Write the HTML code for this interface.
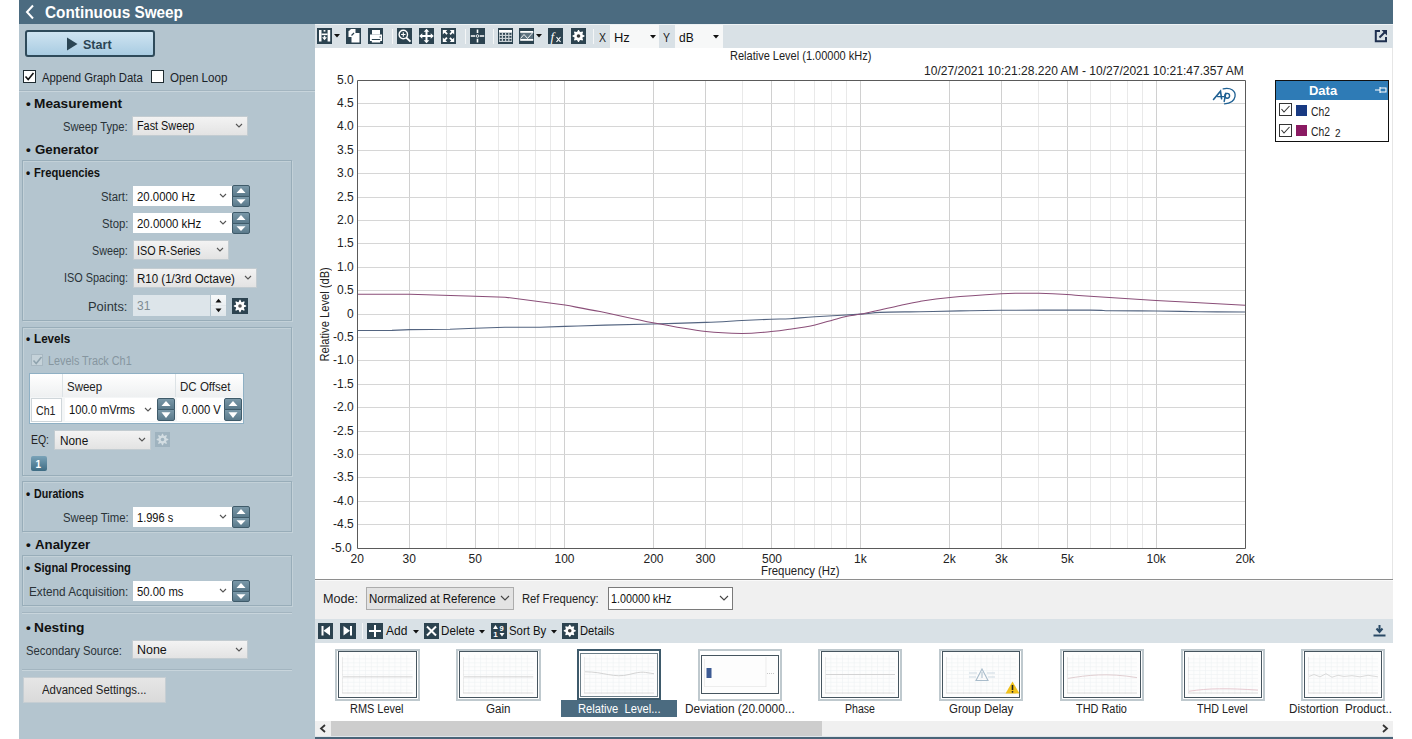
<!DOCTYPE html>
<html><head><meta charset="utf-8"><style>
html,body{margin:0;padding:0;}
body{width:1412px;height:739px;position:relative;overflow:hidden;background:#fff;font-family:"Liberation Sans", sans-serif;}
</style></head><body>
<div style="position:absolute;box-sizing:border-box;left:19px;top:0px;width:1374px;height:24px;background:#4b6b80;"></div>
<svg style="position:absolute;left:24px;top:4px;" width="12" height="16" viewBox="0 0 12 16"><path d="M9 1.5 L3 8 L9 14.5" stroke="#fff" stroke-width="2" fill="none"/></svg>
<span id="t0" style="position:absolute;left:45.04px;top:5.46px;font-size:16px;line-height:16px;font-weight:700;color:#fff;white-space:pre;transform:scaleX(0.9582);transform-origin:0 0;">Continuous Sweep</span>
<div style="position:absolute;box-sizing:border-box;left:19px;top:24px;width:296px;height:715px;background:#b4c5cf;"></div>
<div style="position:absolute;box-sizing:border-box;left:25px;top:30px;width:130px;height:27px;border:2px solid #2e4a5a;border-radius:3px;background:linear-gradient(#cfe4f1,#a9cce2);"></div>
<svg style="position:absolute;left:66px;top:37px;" width="12" height="14" viewBox="0 0 12 14"><path d="M1 0.5 L11.5 7 L1 13.5 Z" fill="#2b4554"/></svg>
<span id="t1" style="position:absolute;left:83.03px;top:38.30px;font-size:13px;line-height:13px;font-weight:700;color:#2b4554;white-space:pre;transform:scaleX(0.9655);transform-origin:0 0;">Start</span>
<div style="position:absolute;box-sizing:border-box;left:23px;top:70px;width:13px;height:13px;border:1px solid #1e2a30;background:#fff;"></div>
<svg style="position:absolute;left:23px;top:70px;" width="13" height="13" viewBox="0 0 13 13"><path d="M2.5 6.5 L5.2 9.5 L10.5 3" stroke="#111" stroke-width="1.6" fill="none"/></svg>
<span id="t2" style="position:absolute;left:42.00px;top:71.84px;font-size:12px;line-height:12px;font-weight:400;color:#1b2328;white-space:pre;transform:scaleX(0.9439);transform-origin:0 0;">Append Graph Data</span>
<div style="position:absolute;box-sizing:border-box;left:151px;top:70px;width:13px;height:13px;border:1px solid #1e2a30;background:#fff;"></div>
<span id="t3" style="position:absolute;left:170.00px;top:71.84px;font-size:12px;line-height:12px;font-weight:400;color:#1b2328;white-space:pre;transform:scaleX(0.9661);transform-origin:0 0;">Open Loop</span>
<div style="position:absolute;box-sizing:border-box;left:19px;top:90px;width:296px;height:1px;background:#a3b5c0;"></div>
<div style="position:absolute;box-sizing:border-box;left:19px;top:91px;width:296px;height:1px;background:#c8d5dc;"></div>
<span id="t4" style="position:absolute;left:26.00px;top:97.27px;font-size:13.5px;line-height:13.5px;font-weight:700;color:#111;white-space:pre;">•</span>
<span id="t5" style="position:absolute;left:33.99px;top:97.27px;font-size:13.5px;line-height:13.5px;font-weight:700;color:#111;white-space:pre;transform:scaleX(1.0116);transform-origin:0 0;">Measurement</span>
<span id="t6" style="position:absolute;left:62.52px;top:121.24px;font-size:12px;line-height:12px;font-weight:400;color:#2a3338;white-space:pre;transform:scaleX(0.9342);transform-origin:0 0;">Sweep Type:</span>
<div style="position:absolute;box-sizing:border-box;left:132px;top:116px;width:116px;height:19.5px;border:1px solid #c3ccd1;background:linear-gradient(#f3f3f3,#e3e3e3);"></div>
<span id="t7" style="position:absolute;left:137.09px;top:120.49px;font-size:12px;line-height:12px;font-weight:400;color:#111;white-space:pre;transform:scaleX(0.9032);transform-origin:0 0;">Fast Sweep</span>
<svg style="position:absolute;left:235px;top:122.75px;" width="8" height="5" viewBox="0 0 8 5"><path d="M1 1 L4 4 L7 1" stroke="#555" stroke-width="1.1" fill="none"/></svg>
<span id="t8" style="position:absolute;left:26.00px;top:143.27px;font-size:13.5px;line-height:13.5px;font-weight:700;color:#111;white-space:pre;">•</span>
<span id="t9" style="position:absolute;left:35.00px;top:143.27px;font-size:13.5px;line-height:13.5px;font-weight:700;color:#111;white-space:pre;transform:scaleX(0.9851);transform-origin:0 0;">Generator</span>
<div style="position:absolute;box-sizing:border-box;left:22px;top:160px;width:270px;height:161px;border:1px solid #98adb9;box-shadow:inset 1px 1px 0 #c3d1d8, 1px 1px 0 #c3d1d8;"></div>
<span id="t10" style="position:absolute;left:26.00px;top:166.54px;font-size:12px;line-height:12px;font-weight:700;color:#111;white-space:pre;">•</span>
<span id="t11" style="position:absolute;left:34.07px;top:166.54px;font-size:12px;line-height:12px;font-weight:700;color:#111;white-space:pre;transform:scaleX(0.9350);transform-origin:0 0;">Frequencies</span>
<span id="t12" style="position:absolute;left:100.58px;top:190.84px;font-size:12px;line-height:12px;font-weight:400;color:#2a3338;white-space:pre;transform:scaleX(0.9445);transform-origin:0 0;">Start:</span>
<div style="position:absolute;box-sizing:border-box;left:133px;top:186px;width:99px;height:20px;background:#fff;"></div>
<span id="t13" style="position:absolute;left:137.05px;top:190.74px;font-size:12px;line-height:12px;font-weight:400;color:#111;white-space:pre;transform:scaleX(0.9500);transform-origin:0 0;">20.0000 Hz</span>
<svg style="position:absolute;left:219px;top:193.0px;" width="8" height="5" viewBox="0 0 8 5"><path d="M1 1 L4 4 L7 1" stroke="#555" stroke-width="1.1" fill="none"/></svg>
<div style="position:absolute;box-sizing:border-box;left:232px;top:185px;width:18px;height:12px;border:1px solid #3f5b6a;background:linear-gradient(#7a98a8,#5b7a8b);border-radius:2px 2px 0 0;"></div>
<div style="position:absolute;box-sizing:border-box;left:232px;top:196px;width:18px;height:11px;border:1px solid #3f5b6a;background:linear-gradient(#7a98a8,#5b7a8b);border-radius:0 0 2px 2px;"></div>
<svg style="position:absolute;left:232px;top:185px;" width="18" height="22" viewBox="0 0 18 22"><path d="M4.5 8 L9.0 3 L13.5 8 Z" fill="#fff"/><path d="M4.5 14.2 L9.0 19 L13.5 14.2 Z" fill="#fff"/></svg>
<span id="t14" style="position:absolute;left:101.57px;top:217.94px;font-size:12px;line-height:12px;font-weight:400;color:#2a3338;white-space:pre;transform:scaleX(0.9439);transform-origin:0 0;">Stop:</span>
<div style="position:absolute;box-sizing:border-box;left:133px;top:213px;width:99px;height:20px;background:#fff;"></div>
<span id="t15" style="position:absolute;left:137.05px;top:217.74px;font-size:12px;line-height:12px;font-weight:400;color:#111;white-space:pre;transform:scaleX(0.9545);transform-origin:0 0;">20.0000 kHz</span>
<svg style="position:absolute;left:219px;top:220.0px;" width="8" height="5" viewBox="0 0 8 5"><path d="M1 1 L4 4 L7 1" stroke="#555" stroke-width="1.1" fill="none"/></svg>
<div style="position:absolute;box-sizing:border-box;left:232px;top:212px;width:18px;height:12px;border:1px solid #3f5b6a;background:linear-gradient(#7a98a8,#5b7a8b);border-radius:2px 2px 0 0;"></div>
<div style="position:absolute;box-sizing:border-box;left:232px;top:223px;width:18px;height:11px;border:1px solid #3f5b6a;background:linear-gradient(#7a98a8,#5b7a8b);border-radius:0 0 2px 2px;"></div>
<svg style="position:absolute;left:232px;top:212px;" width="18" height="22" viewBox="0 0 18 22"><path d="M4.5 8 L9.0 3 L13.5 8 Z" fill="#fff"/><path d="M4.5 14.2 L9.0 19 L13.5 14.2 Z" fill="#fff"/></svg>
<span id="t16" style="position:absolute;left:92.14px;top:244.94px;font-size:12px;line-height:12px;font-weight:400;color:#2a3338;white-space:pre;transform:scaleX(0.8947);transform-origin:0 0;">Sweep:</span>
<div style="position:absolute;box-sizing:border-box;left:133px;top:240px;width:96px;height:20px;border:1px solid #c3ccd1;background:linear-gradient(#f3f3f3,#e3e3e3);"></div>
<span id="t17" style="position:absolute;left:137.10px;top:244.74px;font-size:12px;line-height:12px;font-weight:400;color:#111;white-space:pre;transform:scaleX(0.8986);transform-origin:0 0;">ISO R-Series</span>
<svg style="position:absolute;left:216px;top:247.0px;" width="8" height="5" viewBox="0 0 8 5"><path d="M1 1 L4 4 L7 1" stroke="#555" stroke-width="1.1" fill="none"/></svg>
<span id="t18" style="position:absolute;left:63.63px;top:272.44px;font-size:12px;line-height:12px;font-weight:400;color:#2a3338;white-space:pre;transform:scaleX(0.9048);transform-origin:0 0;">ISO Spacing:</span>
<div style="position:absolute;box-sizing:border-box;left:133px;top:268px;width:124px;height:20px;border:1px solid #c3ccd1;background:linear-gradient(#f3f3f3,#e3e3e3);"></div>
<span id="t19" style="position:absolute;left:137.04px;top:272.74px;font-size:12px;line-height:12px;font-weight:400;color:#111;white-space:pre;transform:scaleX(0.9600);transform-origin:0 0;">R10 (1/3rd Octave)</span>
<svg style="position:absolute;left:244px;top:275.0px;" width="8" height="5" viewBox="0 0 8 5"><path d="M1 1 L4 4 L7 1" stroke="#555" stroke-width="1.1" fill="none"/></svg>
<span id="t20" style="position:absolute;left:88.40px;top:300.54px;font-size:12px;line-height:12px;font-weight:400;color:#2a3338;white-space:pre;transform:scaleX(1.0747);transform-origin:0 0;">Points:</span>
<div style="position:absolute;box-sizing:border-box;left:133px;top:295px;width:77px;height:21px;background:#dde5ea;"></div>
<span id="t21" style="position:absolute;left:137.00px;top:300.24px;font-size:12px;line-height:12px;font-weight:400;color:#7f8c93;white-space:pre;">31</span>
<div style="position:absolute;box-sizing:border-box;left:211px;top:295px;width:15px;height:21px;background:linear-gradient(#f7f9fa,#dfe6ea);"></div>
<div style="position:absolute;box-sizing:border-box;left:211px;top:305px;width:15px;height:1px;background:#e3e8eb;"></div>
<svg style="position:absolute;left:211px;top:295px;" width="15" height="21" viewBox="0 0 15 21"><path d="M4.5 7.5 L7.5 3.8 L10.5 7.5 Z" fill="#111"/><path d="M4.5 13.5 L7.5 17.2 L10.5 13.5 Z" fill="#111"/></svg>
<div style="position:absolute;box-sizing:border-box;left:232px;top:298px;width:16px;height:16px;background:#2c4350;"></div>
<svg style="position:absolute;left:232px;top:298px;" width="16" height="16" viewBox="0 0 16 16"><polygon points="6.67,3.91 7.57,1.82 8.43,1.82 9.33,3.91 9.95,4.17 12.07,3.32 12.68,3.93 11.83,6.05 12.09,6.67 14.18,7.57 14.18,8.43 12.09,9.33 11.83,9.95 12.68,12.07 12.07,12.68 9.95,11.83 9.33,12.09 8.43,14.18 7.57,14.18 6.67,12.09 6.05,11.83 3.93,12.68 3.32,12.07 4.17,9.95 3.91,9.33 1.82,8.43 1.82,7.57 3.91,6.67 4.17,6.05 3.32,3.93 3.93,3.32 6.05,4.17" fill="#fff"/><circle cx="8.0" cy="8.0" r="1.8" fill="#555"/></svg>
<div style="position:absolute;box-sizing:border-box;left:22px;top:327px;width:270px;height:149px;border:1px solid #98adb9;box-shadow:inset 1px 1px 0 #c3d1d8, 1px 1px 0 #c3d1d8;"></div>
<span id="t22" style="position:absolute;left:26.00px;top:333.24px;font-size:12px;line-height:12px;font-weight:700;color:#111;white-space:pre;">•</span>
<span id="t23" style="position:absolute;left:34.03px;top:333.24px;font-size:12px;line-height:12px;font-weight:700;color:#111;white-space:pre;transform:scaleX(0.9722);transform-origin:0 0;">Levels</span>
<div style="position:absolute;box-sizing:border-box;left:31px;top:354px;width:12px;height:12px;border:1px solid #a8b8c2;background:#c5d2d9;"></div>
<svg style="position:absolute;left:31px;top:354px;" width="12" height="12" viewBox="0 0 12 12"><path d="M2.5 6.5 L5.2 9.5 L10.5 3" stroke="#8fa3ae" stroke-width="1.6" fill="none"/></svg>
<span id="t24" style="position:absolute;left:48.03px;top:354.54px;font-size:12px;line-height:12px;font-weight:400;color:#8696a0;white-space:pre;transform:scaleX(0.9023);transform-origin:0 0;">Levels Track Ch1</span>
<div style="position:absolute;box-sizing:border-box;left:29px;top:373px;width:215px;height:51px;border:1px solid #8fb0c4;background:#fff;"></div>
<div style="position:absolute;box-sizing:border-box;left:30px;top:374px;width:213px;height:23px;background:linear-gradient(#fff,#eef0f1);"></div>
<div style="position:absolute;box-sizing:border-box;left:62px;top:374px;width:1px;height:23px;background:#dde3e6;"></div>
<div style="position:absolute;box-sizing:border-box;left:175px;top:374px;width:1px;height:23px;background:#dde3e6;"></div>
<span id="t25" style="position:absolute;left:67.04px;top:380.94px;font-size:12px;line-height:12px;font-weight:400;color:#222;white-space:pre;transform:scaleX(0.9580);transform-origin:0 0;">Sweep</span>
<span id="t26" style="position:absolute;left:180.05px;top:380.94px;font-size:12px;line-height:12px;font-weight:400;color:#222;white-space:pre;transform:scaleX(0.9624);transform-origin:0 0;">DC Offset</span>
<div style="position:absolute;box-sizing:border-box;left:30px;top:397px;width:213px;height:25px;background:#f4f6f7;"></div>
<div style="position:absolute;box-sizing:border-box;left:31px;top:398px;width:31px;height:24px;background:#fff;border:1px solid #cfd6da;"></div>
<span id="t27" style="position:absolute;left:36.05px;top:404.74px;font-size:12px;line-height:12px;font-weight:400;color:#222;white-space:pre;transform:scaleX(0.8845);transform-origin:0 0;">Ch1</span>
<div style="position:absolute;box-sizing:border-box;left:65px;top:398px;width:92px;height:23px;background:#fff;"></div>
<span id="t28" style="position:absolute;left:69.07px;top:404.24px;font-size:12px;line-height:12px;font-weight:400;color:#111;white-space:pre;transform:scaleX(0.9286);transform-origin:0 0;">100.0 mVrms</span>
<svg style="position:absolute;left:144px;top:406.5px;" width="8" height="5" viewBox="0 0 8 5"><path d="M1 1 L4 4 L7 1" stroke="#555" stroke-width="1.1" fill="none"/></svg>
<div style="position:absolute;box-sizing:border-box;left:157px;top:398px;width:18px;height:12px;border:1px solid #3f5b6a;background:linear-gradient(#7a98a8,#5b7a8b);border-radius:2px 2px 0 0;"></div>
<div style="position:absolute;box-sizing:border-box;left:157px;top:409px;width:18px;height:12px;border:1px solid #3f5b6a;background:linear-gradient(#7a98a8,#5b7a8b);border-radius:0 0 2px 2px;"></div>
<svg style="position:absolute;left:157px;top:398px;" width="18" height="23" viewBox="0 0 18 23"><path d="M4.5 8 L9.0 3 L13.5 8 Z" fill="#fff"/><path d="M4.5 14.2 L9.0 20 L13.5 14.2 Z" fill="#fff"/></svg>
<div style="position:absolute;box-sizing:border-box;left:177px;top:398px;width:47px;height:23px;background:#fff;"></div>
<span id="t29" style="position:absolute;left:182.00px;top:404.24px;font-size:12px;line-height:12px;font-weight:400;color:#111;white-space:pre;transform:scaleX(0.9397);transform-origin:0 0;">0.000 V</span>
<div style="position:absolute;box-sizing:border-box;left:224px;top:398px;width:18px;height:12px;border:1px solid #3f5b6a;background:linear-gradient(#7a98a8,#5b7a8b);border-radius:2px 2px 0 0;"></div>
<div style="position:absolute;box-sizing:border-box;left:224px;top:409px;width:18px;height:12px;border:1px solid #3f5b6a;background:linear-gradient(#7a98a8,#5b7a8b);border-radius:0 0 2px 2px;"></div>
<svg style="position:absolute;left:224px;top:398px;" width="18" height="23" viewBox="0 0 18 23"><path d="M4.5 8 L9.0 3 L13.5 8 Z" fill="#fff"/><path d="M4.5 14.2 L9.0 20 L13.5 14.2 Z" fill="#fff"/></svg>
<span id="t30" style="position:absolute;left:31.11px;top:434.04px;font-size:12px;line-height:12px;font-weight:400;color:#222;white-space:pre;transform:scaleX(0.8716);transform-origin:0 0;">EQ:</span>
<div style="position:absolute;box-sizing:border-box;left:54px;top:430px;width:97px;height:20px;border:1px solid #c3ccd1;background:linear-gradient(#f3f3f3,#e3e3e3);"></div>
<span id="t31" style="position:absolute;left:59.82px;top:434.74px;font-size:12px;line-height:12px;font-weight:400;color:#111;white-space:pre;transform:scaleX(0.9829);transform-origin:0 0;">None</span>
<svg style="position:absolute;left:138px;top:437.0px;" width="8" height="5" viewBox="0 0 8 5"><path d="M1 1 L4 4 L7 1" stroke="#555" stroke-width="1.1" fill="none"/></svg>
<div style="position:absolute;box-sizing:border-box;left:155px;top:432px;width:15px;height:15px;background:#9fb3bf;"></div>
<svg style="position:absolute;left:155px;top:432px;" width="15" height="15" viewBox="0 0 15 15"><polygon points="6.26,3.70 7.10,1.71 7.90,1.71 8.74,3.70 9.32,3.94 11.31,3.12 11.88,3.69 11.06,5.68 11.30,6.26 13.29,7.10 13.29,7.90 11.30,8.74 11.06,9.32 11.88,11.31 11.31,11.88 9.32,11.06 8.74,11.30 7.90,13.29 7.10,13.29 6.26,11.30 5.68,11.06 3.69,11.88 3.12,11.31 3.94,9.32 3.70,8.74 1.71,7.90 1.71,7.10 3.70,6.26 3.94,5.68 3.12,3.69 3.69,3.12 5.68,3.94" fill="#d3dde2"/><circle cx="7.5" cy="7.5" r="1.8" fill="#9fb3bf"/></svg>
<div style="position:absolute;box-sizing:border-box;left:31px;top:456px;width:16px;height:15px;background:linear-gradient(#7aa3b8,#3e6c84);border-radius:2px;border:0;"></div>
<span id="t32" style="position:absolute;left:35.50px;top:460.24px;font-size:10px;line-height:10px;font-weight:700;color:#fff;white-space:pre;">1</span>
<div style="position:absolute;box-sizing:border-box;left:22px;top:481px;width:270px;height:51px;border:1px solid #98adb9;box-shadow:inset 1px 1px 0 #c3d1d8, 1px 1px 0 #c3d1d8;"></div>
<span id="t33" style="position:absolute;left:26.00px;top:488.24px;font-size:12px;line-height:12px;font-weight:700;color:#111;white-space:pre;">•</span>
<span id="t34" style="position:absolute;left:34.11px;top:488.24px;font-size:12px;line-height:12px;font-weight:700;color:#111;white-space:pre;transform:scaleX(0.8909);transform-origin:0 0;">Durations</span>
<span id="t35" style="position:absolute;left:62.56px;top:511.94px;font-size:12px;line-height:12px;font-weight:400;color:#2a3338;white-space:pre;transform:scaleX(0.9480);transform-origin:0 0;">Sweep Time:</span>
<div style="position:absolute;box-sizing:border-box;left:133px;top:507px;width:99px;height:20px;background:#fff;"></div>
<span id="t36" style="position:absolute;left:137.08px;top:511.74px;font-size:12px;line-height:12px;font-weight:400;color:#111;white-space:pre;transform:scaleX(0.9211);transform-origin:0 0;">1.996 s</span>
<svg style="position:absolute;left:219px;top:514.0px;" width="8" height="5" viewBox="0 0 8 5"><path d="M1 1 L4 4 L7 1" stroke="#555" stroke-width="1.1" fill="none"/></svg>
<div style="position:absolute;box-sizing:border-box;left:232px;top:506px;width:18px;height:12px;border:1px solid #3f5b6a;background:linear-gradient(#7a98a8,#5b7a8b);border-radius:2px 2px 0 0;"></div>
<div style="position:absolute;box-sizing:border-box;left:232px;top:517px;width:18px;height:11px;border:1px solid #3f5b6a;background:linear-gradient(#7a98a8,#5b7a8b);border-radius:0 0 2px 2px;"></div>
<svg style="position:absolute;left:232px;top:506px;" width="18" height="22" viewBox="0 0 18 22"><path d="M4.5 8 L9.0 3 L13.5 8 Z" fill="#fff"/><path d="M4.5 14.2 L9.0 19 L13.5 14.2 Z" fill="#fff"/></svg>
<span id="t37" style="position:absolute;left:26.00px;top:538.17px;font-size:13.5px;line-height:13.5px;font-weight:700;color:#111;white-space:pre;">•</span>
<span id="t38" style="position:absolute;left:35.00px;top:538.17px;font-size:13.5px;line-height:13.5px;font-weight:700;color:#111;white-space:pre;transform:scaleX(0.9821);transform-origin:0 0;">Analyzer</span>
<div style="position:absolute;box-sizing:border-box;left:22px;top:555px;width:270px;height:51px;border:1px solid #98adb9;box-shadow:inset 1px 1px 0 #c3d1d8, 1px 1px 0 #c3d1d8;"></div>
<span id="t39" style="position:absolute;left:26.00px;top:562.14px;font-size:12px;line-height:12px;font-weight:700;color:#111;white-space:pre;">•</span>
<span id="t40" style="position:absolute;left:34.07px;top:562.14px;font-size:12px;line-height:12px;font-weight:700;color:#111;white-space:pre;transform:scaleX(0.9314);transform-origin:0 0;">Signal Processing</span>
<span id="t41" style="position:absolute;left:29.03px;top:585.84px;font-size:12px;line-height:12px;font-weight:400;color:#2a3338;white-space:pre;transform:scaleX(0.9801);transform-origin:0 0;">Extend Acquisition:</span>
<div style="position:absolute;box-sizing:border-box;left:133px;top:581px;width:99px;height:20px;background:#fff;"></div>
<span id="t42" style="position:absolute;left:136.85px;top:585.74px;font-size:12px;line-height:12px;font-weight:400;color:#111;white-space:pre;transform:scaleX(0.9419);transform-origin:0 0;">50.00 ms</span>
<svg style="position:absolute;left:219px;top:588.0px;" width="8" height="5" viewBox="0 0 8 5"><path d="M1 1 L4 4 L7 1" stroke="#555" stroke-width="1.1" fill="none"/></svg>
<div style="position:absolute;box-sizing:border-box;left:232px;top:580px;width:18px;height:12px;border:1px solid #3f5b6a;background:linear-gradient(#7a98a8,#5b7a8b);border-radius:2px 2px 0 0;"></div>
<div style="position:absolute;box-sizing:border-box;left:232px;top:591px;width:18px;height:11px;border:1px solid #3f5b6a;background:linear-gradient(#7a98a8,#5b7a8b);border-radius:0 0 2px 2px;"></div>
<svg style="position:absolute;left:232px;top:580px;" width="18" height="22" viewBox="0 0 18 22"><path d="M4.5 8 L9.0 3 L13.5 8 Z" fill="#fff"/><path d="M4.5 14.2 L9.0 19 L13.5 14.2 Z" fill="#fff"/></svg>
<div style="position:absolute;box-sizing:border-box;left:22px;top:612px;width:270px;height:1px;background:#a3b5c0;"></div>
<div style="position:absolute;box-sizing:border-box;left:22px;top:613px;width:270px;height:1px;background:#c8d5dc;"></div>
<span id="t43" style="position:absolute;left:26.00px;top:620.67px;font-size:13.5px;line-height:13.5px;font-weight:700;color:#111;white-space:pre;">•</span>
<span id="t44" style="position:absolute;left:33.98px;top:620.67px;font-size:13.5px;line-height:13.5px;font-weight:700;color:#111;white-space:pre;transform:scaleX(1.0208);transform-origin:0 0;">Nesting</span>
<span id="t45" style="position:absolute;left:26.04px;top:645.34px;font-size:12px;line-height:12px;font-weight:400;color:#2a3338;white-space:pre;transform:scaleX(0.9400);transform-origin:0 0;">Secondary Source:</span>
<div style="position:absolute;box-sizing:border-box;left:132px;top:640px;width:116px;height:19px;border:1px solid #c3ccd1;background:linear-gradient(#f3f3f3,#e3e3e3);"></div>
<span id="t46" style="position:absolute;left:137.16px;top:644.24px;font-size:12px;line-height:12px;font-weight:400;color:#111;white-space:pre;transform:scaleX(1.0370);transform-origin:0 0;">None</span>
<svg style="position:absolute;left:235px;top:646.5px;" width="8" height="5" viewBox="0 0 8 5"><path d="M1 1 L4 4 L7 1" stroke="#555" stroke-width="1.1" fill="none"/></svg>
<div style="position:absolute;box-sizing:border-box;left:22px;top:669px;width:270px;height:1px;background:#a3b5c0;"></div>
<div style="position:absolute;box-sizing:border-box;left:22px;top:670px;width:270px;height:1px;background:#c8d5dc;"></div>
<div style="position:absolute;box-sizing:border-box;left:23px;top:677px;width:143px;height:26px;border:1px solid #c6ced3;background:linear-gradient(#e6e6e6,#dadada);"></div>
<span id="t47" style="position:absolute;left:41.99px;top:684.04px;font-size:12px;line-height:12px;font-weight:400;color:#222;white-space:pre;transform:scaleX(0.9496);transform-origin:0 0;">Advanced Settings...</span>
<div style="position:absolute;box-sizing:border-box;left:315px;top:24px;width:1078px;height:1px;background:#eef2f4;"></div>
<div style="position:absolute;box-sizing:border-box;left:315px;top:25px;width:1078px;height:23px;background:#d9e1e6;"></div>
<div style="position:absolute;box-sizing:border-box;left:315px;top:48px;width:1078px;height:531px;background:#fff;"></div>
<div style="position:absolute;box-sizing:border-box;left:1392px;top:48px;width:1px;height:531px;background:#e6e6e6;"></div>
<div style="position:absolute;box-sizing:border-box;left:317px;top:28px;width:15px;height:16px;background:#2c4350;"></div>
<svg style="position:absolute;left:317px;top:28px;" width="15" height="16" viewBox="0 0 15 16"><rect x="2" y="2" width="2.5" height="11.5" fill="#fff"/><rect x="10.6" y="2" width="2.6" height="11.5" fill="#fff"/><rect x="4.5" y="5.5" width="6.1" height="1.6" fill="#fff"/><rect x="6.6" y="2" width="1.8" height="1.6" fill="#fff"/><path d="M5 9.3 H10 L7.5 12.3 Z" fill="#fff"/><rect x="6.8" y="7.8" width="1.5" height="2" fill="#fff"/></svg>
<svg style="position:absolute;left:334px;top:34px;" width="6" height="4" viewBox="0 0 6 4"><path d="M0 0 L6 0 L3 3.5 Z" fill="#111"/></svg>
<div style="position:absolute;box-sizing:border-box;left:346px;top:28px;width:15px;height:16px;background:#2c4350;"></div>
<svg style="position:absolute;left:346px;top:28px;" width="15" height="16" viewBox="0 0 15 16"><path d="M4.5 1 H9.5 V9 H2.5 V3 Z" fill="#fff"/><path d="M8 5 H13.5 V14.5 H5.5 V7.5 Z" fill="#fff"/><path d="M5.5 7.5 L8 5" stroke="#2c4350" stroke-width="1.2"/><path d="M2.5 3 L4.5 1" stroke="#2c4350" stroke-width="0.8"/></svg>
<div style="position:absolute;box-sizing:border-box;left:368px;top:28px;width:15px;height:16px;background:#2c4350;"></div>
<svg style="position:absolute;left:368px;top:28px;" width="15" height="16" viewBox="0 0 15 16"><rect x="4" y="2" width="8" height="4.5" fill="#fff"/><rect x="2" y="6.5" width="12" height="6.5" fill="#fff"/><rect x="3.8" y="11" width="8.4" height="1" fill="#2c4350"/><rect x="3.8" y="13" width="8.4" height="1.5" fill="#fff"/><rect x="11.5" y="8.5" width="1.5" height="1" fill="#2c4350"/></svg>
<div style="position:absolute;box-sizing:border-box;left:392px;top:29px;width:1px;height:15px;background:#f4f6f7;"></div>
<div style="position:absolute;box-sizing:border-box;left:397px;top:28px;width:15px;height:16px;background:#2c4350;"></div>
<svg style="position:absolute;left:397px;top:28px;" width="15" height="16" viewBox="0 0 15 16"><circle cx="6.3" cy="6.5" r="4.2" stroke="#fff" stroke-width="1.4" fill="none"/><path d="M9.3 9.6 L13.5 13.6" stroke="#fff" stroke-width="2"/><path d="M6.3 4.3 V8.7 M4.1 6.5 H8.5" stroke="#fff" stroke-width="1.1"/></svg>
<div style="position:absolute;box-sizing:border-box;left:419px;top:28px;width:15px;height:16px;background:#2c4350;"></div>
<svg style="position:absolute;left:419px;top:28px;" width="15" height="16" viewBox="0 0 15 16"><path d="M7.5 0.8 L10.3 3.8 H8.5 V7 H11.7 V5.2 L14.8 8 L11.7 10.8 V9 H8.5 V12.2 H10.3 L7.5 15.2 L4.7 12.2 H6.5 V9 H3.3 V10.8 L0.2 8 L3.3 5.2 V7 H6.5 V3.8 H4.7 Z" fill="#fff"/></svg>
<div style="position:absolute;box-sizing:border-box;left:441px;top:28px;width:15px;height:16px;background:#2c4350;"></div>
<svg style="position:absolute;left:441px;top:28px;" width="15" height="16" viewBox="0 0 15 16"><path d="M1.8 2 H6.3 L4.8 3.5 L6.8 5.5 L5.5 6.8 L3.5 4.8 L1.8 6.5 Z M13.2 2 V6.5 L11.7 5 L9.7 7 L8.4 5.7 L10.4 3.7 L8.8 2 Z M1.8 14 V9.5 L3.3 11 L5.3 9 L6.6 10.3 L4.6 12.3 L6.2 14 Z M13.2 14 H8.7 L10.2 12.5 L8.2 10.5 L9.5 9.2 L11.5 11.2 L13.2 9.5 Z" fill="#fff"/></svg>
<div style="position:absolute;box-sizing:border-box;left:465px;top:29px;width:1px;height:15px;background:#f4f6f7;"></div>
<div style="position:absolute;box-sizing:border-box;left:470px;top:28px;width:15px;height:16px;background:#2c4350;"></div>
<svg style="position:absolute;left:470px;top:28px;" width="15" height="16" viewBox="0 0 15 16"><path d="M7.5 1.5 V5 M7.5 10.8 V14.5 M0.8 8 H5.2 M9.8 8 H14.2" stroke="#fff" stroke-width="1.6"/><circle cx="7.5" cy="8" r="1.3" stroke="#fff" stroke-width="0.9" fill="none"/></svg>
<div style="position:absolute;box-sizing:border-box;left:493px;top:29px;width:1px;height:15px;background:#f4f6f7;"></div>
<div style="position:absolute;box-sizing:border-box;left:498px;top:28px;width:15px;height:16px;background:#2c4350;"></div>
<svg style="position:absolute;left:498px;top:28px;" width="15" height="16" viewBox="0 0 15 16"><rect x="1" y="2" width="13" height="12" fill="#c9d1d5"/><rect x="1" y="2" width="13" height="2" fill="#fff"/><g fill="#2c4350"><rect x="1.8" y="5" width="2" height="1.8"/><rect x="5.0" y="5" width="2" height="1.8"/><rect x="8.200000000000001" y="5" width="2" height="1.8"/><rect x="11.400000000000002" y="5" width="2" height="1.8"/><rect x="1.8" y="8" width="2" height="1.8"/><rect x="5.0" y="8" width="2" height="1.8"/><rect x="8.200000000000001" y="8" width="2" height="1.8"/><rect x="11.400000000000002" y="8" width="2" height="1.8"/><rect x="1.8" y="11" width="2" height="1.8"/><rect x="5.0" y="11" width="2" height="1.8"/><rect x="8.200000000000001" y="11" width="2" height="1.8"/><rect x="11.400000000000002" y="11" width="2" height="1.8"/></g></svg>
<div style="position:absolute;box-sizing:border-box;left:519px;top:28px;width:15px;height:16px;background:#2c4350;"></div>
<svg style="position:absolute;left:519px;top:28px;" width="15" height="16" viewBox="0 0 15 16"><rect x="1.5" y="4.5" width="12.5" height="6.5" fill="#5f7380"/><rect x="1.2" y="3" width="13" height="1.8" fill="#fff"/><rect x="1.2" y="11" width="13" height="1.8" fill="#fff"/><path d="M1.5 10.5 L5 6.5 L8.5 10.5 L13.8 4.5" stroke="#fff" stroke-width="0.9" fill="none"/></svg>
<svg style="position:absolute;left:536px;top:34px;" width="6" height="4" viewBox="0 0 6 4"><path d="M0 0 L6 0 L3 3.5 Z" fill="#111"/></svg>
<div style="position:absolute;box-sizing:border-box;left:548px;top:28px;width:15px;height:16px;background:#2c4350;"></div>
<svg style="position:absolute;left:548px;top:28px;" width="15" height="16" viewBox="0 0 15 16"><text x="2.5" y="12.5" font-family="Liberation Serif" font-style="italic" font-size="13" fill="#fff">f</text><path d="M8.5 9 L12.5 14 M12.5 9 L8.5 14" stroke="#fff" stroke-width="1.2"/></svg>
<div style="position:absolute;box-sizing:border-box;left:571px;top:28px;width:15px;height:16px;background:#2c4350;"></div>
<svg style="position:absolute;left:571px;top:28px;" width="15" height="16" viewBox="0 0 15 16"><polygon points="6.14,3.82 7.08,2.01 7.92,2.01 8.86,3.82 9.50,4.08 11.44,3.47 12.03,4.06 11.42,6.00 11.68,6.64 13.49,7.58 13.49,8.42 11.68,9.36 11.42,10.00 12.03,11.94 11.44,12.53 9.50,11.92 8.86,12.18 7.92,13.99 7.08,13.99 6.14,12.18 5.50,11.92 3.56,12.53 2.97,11.94 3.58,10.00 3.32,9.36 1.51,8.42 1.51,7.58 3.32,6.64 3.58,6.00 2.97,4.06 3.56,3.47 5.50,4.08" fill="#fff"/><circle cx="7.5" cy="8.0" r="1.8" fill="#3a3a3a"/></svg>
<div style="position:absolute;box-sizing:border-box;left:593px;top:29px;width:1px;height:15px;background:#f4f6f7;"></div>
<span id="t48" style="position:absolute;left:599.00px;top:31.54px;font-size:12px;line-height:12px;font-weight:400;color:#222;white-space:pre;transform:scaleX(0.8750);transform-origin:0 0;">X</span>
<div style="position:absolute;box-sizing:border-box;left:610px;top:25px;width:49px;height:23px;background:#f7f8f8;"></div>
<span id="t49" style="position:absolute;left:613.92px;top:31.54px;font-size:12px;line-height:12px;font-weight:400;color:#111;white-space:pre;transform:scaleX(1.0769);transform-origin:0 0;">Hz</span>
<svg style="position:absolute;left:650px;top:35px;" width="6" height="4" viewBox="0 0 6 4"><path d="M0 0 L6 0 L3 3.5 Z" fill="#111"/></svg>
<span id="t50" style="position:absolute;left:663.00px;top:31.54px;font-size:12px;line-height:12px;font-weight:400;color:#222;white-space:pre;transform:scaleX(0.8750);transform-origin:0 0;">Y</span>
<div style="position:absolute;box-sizing:border-box;left:675px;top:25px;width:48px;height:23px;background:#f7f8f8;"></div>
<span id="t51" style="position:absolute;left:679.00px;top:31.54px;font-size:12px;line-height:12px;font-weight:400;color:#111;white-space:pre;">dB</span>
<svg style="position:absolute;left:713px;top:35px;" width="6" height="4" viewBox="0 0 6 4"><path d="M0 0 L6 0 L3 3.5 Z" fill="#111"/></svg>
<svg style="position:absolute;left:1374px;top:29px;" width="14" height="14" viewBox="0 0 14 14"><path d="M6 2 H1.8 V12.2 H12 V8" stroke="#1f3050" stroke-width="2" fill="none"/><path d="M5.5 8.5 L11.5 2.5" stroke="#1f3050" stroke-width="2"/><path d="M7.5 1 H13 V6.5 Z" fill="#1f3050"/></svg>
<span id="t52" style="position:absolute;left:730.31px;top:49.94px;font-size:12px;line-height:12px;font-weight:400;color:#222;white-space:pre;transform:scaleX(0.9178);transform-origin:0 0;">Relative Level (1.00000 kHz)</span>
<span id="t53" style="position:absolute;left:924.40px;top:64.94px;font-size:12px;line-height:12px;font-weight:400;color:#222;white-space:pre;transform:scaleX(1.0029);transform-origin:0 0;">10/27/2021 10:21:28.220 AM - 10/27/2021 10:21:47.357 AM</span>
<svg style="position:absolute;left:0px;top:0px;pointer-events:none;" width="1412" height="739" viewBox="0 0 1412 739"><path d="M409.5 80 V548" stroke="#d0d0d0" stroke-width="1"/><path d="M446.5 80 V548" stroke="#e9e9e9" stroke-width="1"/><path d="M475.5 80 V548" stroke="#d0d0d0" stroke-width="1"/><path d="M498.5 80 V548" stroke="#e9e9e9" stroke-width="1"/><path d="M518.5 80 V548" stroke="#e9e9e9" stroke-width="1"/><path d="M535.5 80 V548" stroke="#e9e9e9" stroke-width="1"/><path d="M550.5 80 V548" stroke="#e9e9e9" stroke-width="1"/><path d="M564.5 80 V548" stroke="#d0d0d0" stroke-width="1"/><path d="M653.5 80 V548" stroke="#d0d0d0" stroke-width="1"/><path d="M705.5 80 V548" stroke="#d0d0d0" stroke-width="1"/><path d="M742.5 80 V548" stroke="#e9e9e9" stroke-width="1"/><path d="M771.5 80 V548" stroke="#d0d0d0" stroke-width="1"/><path d="M794.5 80 V548" stroke="#e9e9e9" stroke-width="1"/><path d="M814.5 80 V548" stroke="#e9e9e9" stroke-width="1"/><path d="M831.5 80 V548" stroke="#e9e9e9" stroke-width="1"/><path d="M846.5 80 V548" stroke="#e9e9e9" stroke-width="1"/><path d="M860.5 80 V548" stroke="#d0d0d0" stroke-width="1"/><path d="M949.5 80 V548" stroke="#d0d0d0" stroke-width="1"/><path d="M1001.5 80 V548" stroke="#d0d0d0" stroke-width="1"/><path d="M1038.5 80 V548" stroke="#e9e9e9" stroke-width="1"/><path d="M1067.5 80 V548" stroke="#d0d0d0" stroke-width="1"/><path d="M1090.5 80 V548" stroke="#e9e9e9" stroke-width="1"/><path d="M1110.5 80 V548" stroke="#e9e9e9" stroke-width="1"/><path d="M1127.5 80 V548" stroke="#e9e9e9" stroke-width="1"/><path d="M1142.5 80 V548" stroke="#e9e9e9" stroke-width="1"/><path d="M1156.5 80 V548" stroke="#d0d0d0" stroke-width="1"/><path d="M357 103.5 H1245" stroke="#d6d6d6" stroke-width="1"/><path d="M357 126.5 H1245" stroke="#d6d6d6" stroke-width="1"/><path d="M357 150.5 H1245" stroke="#d6d6d6" stroke-width="1"/><path d="M357 173.5 H1245" stroke="#d6d6d6" stroke-width="1"/><path d="M357 197.5 H1245" stroke="#d6d6d6" stroke-width="1"/><path d="M357 220.5 H1245" stroke="#d6d6d6" stroke-width="1"/><path d="M357 243.5 H1245" stroke="#d6d6d6" stroke-width="1"/><path d="M357 267.5 H1245" stroke="#d6d6d6" stroke-width="1"/><path d="M357 290.5 H1245" stroke="#d6d6d6" stroke-width="1"/><path d="M357 314.5 H1245" stroke="#d6d6d6" stroke-width="1"/><path d="M357 337.5 H1245" stroke="#d6d6d6" stroke-width="1"/><path d="M357 360.5 H1245" stroke="#d6d6d6" stroke-width="1"/><path d="M357 384.5 H1245" stroke="#d6d6d6" stroke-width="1"/><path d="M357 407.5 H1245" stroke="#d6d6d6" stroke-width="1"/><path d="M357 431.5 H1245" stroke="#d6d6d6" stroke-width="1"/><path d="M357 454.5 H1245" stroke="#d6d6d6" stroke-width="1"/><path d="M357 477.5 H1245" stroke="#d6d6d6" stroke-width="1"/><path d="M357 501.5 H1245" stroke="#d6d6d6" stroke-width="1"/><path d="M357 524.5 H1245" stroke="#d6d6d6" stroke-width="1"/><path d="M357 330.5 L392 330.4 L410 329.6 L450 329.2 L475 328.2 L505 327.3 L540 327.3 L565 326.4 C578.33 325.97 590.33 325.50 605 325.1 C619.67 324.70 636.17 324.45 653 324 C669.83 323.55 691.17 322.98 706 322.4 C720.83 321.82 731.17 321.03 742 320.5 C752.83 319.97 763.00 319.50 771 319.2 C779.00 318.90 782.67 319.12 790 318.7 C797.33 318.28 803.17 317.47 815 316.7 C826.83 315.93 850.17 314.82 861 314.1 C871.83 313.38 870.17 312.80 880 312.4 C889.83 312.00 906.67 311.95 920 311.7 C933.33 311.45 946.50 311.13 960 310.9 C973.50 310.67 979.33 310.43 1001 310.3 C1022.67 310.17 1071.83 310.02 1090 310.1 C1108.17 310.18 1099.00 310.65 1110 310.8 C1121.00 310.95 1141.00 310.85 1156 311 C1171.00 311.15 1185.17 311.53 1200 311.7 C1214.83 311.87 1237.50 311.95 1245 312" stroke="#536480" stroke-width="1.1" fill="none"/><path d="M357 294.2 L410 294.2 L475 296.3 L505 297.2 L565 305.1 C576.67 307.27 585.33 308.65 600 311.6 C614.67 314.55 635.33 319.47 653 322.8 C670.67 326.13 691.17 329.83 706 331.6 C720.83 333.37 731.17 333.40 742 333.4 C752.83 333.40 763.00 332.30 771 331.6 C779.00 330.90 782.67 330.32 790 329.2 C797.33 328.08 807.83 326.45 815 324.9 C822.17 323.35 827.67 321.33 833 319.9 C838.33 318.47 842.33 317.27 847 316.3 C851.67 315.33 855.50 315.17 861 314.1 C866.50 313.03 873.50 311.35 880 309.9 C886.50 308.45 893.33 306.82 900 305.4 C906.67 303.98 911.67 302.72 920 301.4 C928.33 300.08 936.50 298.77 950 297.5 C963.50 296.23 989.33 294.50 1001 293.8 C1012.67 293.10 1013.67 293.38 1020 293.3 C1026.33 293.22 1031.17 293.10 1039 293.3 C1046.83 293.50 1058.50 294.00 1067 294.5 C1075.50 295.00 1075.17 295.32 1090 296.3 C1104.83 297.28 1130.17 298.90 1156 300.4 C1181.83 301.90 1230.17 304.48 1245 305.3" stroke="#8a4e78" stroke-width="1.05" fill="none"/><path d="M357.5 80.5 H1245.5 V548.5 H357.5 Z" stroke="#5a5a5a" stroke-width="1" fill="none"/></svg>
<span id="t54" style="position:absolute;left:337.00px;top:74.14px;font-size:12px;line-height:12px;font-weight:400;color:#222;white-space:pre;">5.0</span>
<span id="t55" style="position:absolute;left:337.00px;top:97.14px;font-size:12px;line-height:12px;font-weight:400;color:#222;white-space:pre;">4.5</span>
<span id="t56" style="position:absolute;left:337.00px;top:120.14px;font-size:12px;line-height:12px;font-weight:400;color:#222;white-space:pre;">4.0</span>
<span id="t57" style="position:absolute;left:337.00px;top:144.14px;font-size:12px;line-height:12px;font-weight:400;color:#222;white-space:pre;">3.5</span>
<span id="t58" style="position:absolute;left:337.00px;top:167.14px;font-size:12px;line-height:12px;font-weight:400;color:#222;white-space:pre;">3.0</span>
<span id="t59" style="position:absolute;left:337.00px;top:191.14px;font-size:12px;line-height:12px;font-weight:400;color:#222;white-space:pre;">2.5</span>
<span id="t60" style="position:absolute;left:337.00px;top:214.14px;font-size:12px;line-height:12px;font-weight:400;color:#222;white-space:pre;">2.0</span>
<span id="t61" style="position:absolute;left:337.00px;top:237.14px;font-size:12px;line-height:12px;font-weight:400;color:#222;white-space:pre;">1.5</span>
<span id="t62" style="position:absolute;left:337.00px;top:261.14px;font-size:12px;line-height:12px;font-weight:400;color:#222;white-space:pre;">1.0</span>
<span id="t63" style="position:absolute;left:337.00px;top:284.14px;font-size:12px;line-height:12px;font-weight:400;color:#222;white-space:pre;">0.5</span>
<span id="t64" style="position:absolute;left:347.00px;top:308.14px;font-size:12px;line-height:12px;font-weight:400;color:#222;white-space:pre;">0</span>
<span id="t65" style="position:absolute;left:333.00px;top:331.14px;font-size:12px;line-height:12px;font-weight:400;color:#222;white-space:pre;">-0.5</span>
<span id="t66" style="position:absolute;left:333.00px;top:354.14px;font-size:12px;line-height:12px;font-weight:400;color:#222;white-space:pre;">-1.0</span>
<span id="t67" style="position:absolute;left:333.00px;top:378.14px;font-size:12px;line-height:12px;font-weight:400;color:#222;white-space:pre;">-1.5</span>
<span id="t68" style="position:absolute;left:333.00px;top:401.14px;font-size:12px;line-height:12px;font-weight:400;color:#222;white-space:pre;">-2.0</span>
<span id="t69" style="position:absolute;left:333.00px;top:425.14px;font-size:12px;line-height:12px;font-weight:400;color:#222;white-space:pre;">-2.5</span>
<span id="t70" style="position:absolute;left:333.00px;top:448.14px;font-size:12px;line-height:12px;font-weight:400;color:#222;white-space:pre;">-3.0</span>
<span id="t71" style="position:absolute;left:333.00px;top:471.14px;font-size:12px;line-height:12px;font-weight:400;color:#222;white-space:pre;">-3.5</span>
<span id="t72" style="position:absolute;left:333.00px;top:495.14px;font-size:12px;line-height:12px;font-weight:400;color:#222;white-space:pre;">-4.0</span>
<span id="t73" style="position:absolute;left:333.00px;top:518.14px;font-size:12px;line-height:12px;font-weight:400;color:#222;white-space:pre;">-4.5</span>
<span id="t74" style="position:absolute;left:331.00px;top:542.14px;font-size:12px;line-height:12px;font-weight:400;color:#222;white-space:pre;">-5.0</span>
<span id="t75" style="position:absolute;left:350.50px;top:553.24px;font-size:12px;line-height:12px;font-weight:400;color:#222;white-space:pre;">20</span>
<span id="t76" style="position:absolute;left:402.50px;top:553.24px;font-size:12px;line-height:12px;font-weight:400;color:#222;white-space:pre;">30</span>
<span id="t77" style="position:absolute;left:468.50px;top:553.24px;font-size:12px;line-height:12px;font-weight:400;color:#222;white-space:pre;">50</span>
<span id="t78" style="position:absolute;left:554.50px;top:553.24px;font-size:12px;line-height:12px;font-weight:400;color:#222;white-space:pre;">100</span>
<span id="t79" style="position:absolute;left:643.50px;top:553.24px;font-size:12px;line-height:12px;font-weight:400;color:#222;white-space:pre;">200</span>
<span id="t80" style="position:absolute;left:695.50px;top:553.24px;font-size:12px;line-height:12px;font-weight:400;color:#222;white-space:pre;">300</span>
<span id="t81" style="position:absolute;left:762.00px;top:553.24px;font-size:12px;line-height:12px;font-weight:400;color:#222;white-space:pre;">500</span>
<span id="t82" style="position:absolute;left:854.00px;top:553.24px;font-size:12px;line-height:12px;font-weight:400;color:#222;white-space:pre;">1k</span>
<span id="t83" style="position:absolute;left:943.00px;top:553.24px;font-size:12px;line-height:12px;font-weight:400;color:#222;white-space:pre;">2k</span>
<span id="t84" style="position:absolute;left:995.00px;top:553.24px;font-size:12px;line-height:12px;font-weight:400;color:#222;white-space:pre;">3k</span>
<span id="t85" style="position:absolute;left:1061.00px;top:553.24px;font-size:12px;line-height:12px;font-weight:400;color:#222;white-space:pre;">5k</span>
<span id="t86" style="position:absolute;left:1146.50px;top:553.24px;font-size:12px;line-height:12px;font-weight:400;color:#222;white-space:pre;">10k</span>
<span id="t87" style="position:absolute;left:1235.50px;top:553.24px;font-size:12px;line-height:12px;font-weight:400;color:#222;white-space:pre;">20k</span>
<span id="t88" style="position:absolute;left:760.55px;top:564.54px;font-size:12px;line-height:12px;font-weight:400;color:#222;white-space:pre;transform:scaleX(0.9506);transform-origin:0 0;">Frequency (Hz)</span>
<div style="position:absolute;left:279px;top:311.5px;width:92px;height:14px;transform:rotate(-90deg);transform-origin:46px 7px;font-size:12px;line-height:14px;color:#222;text-align:center;white-space:nowrap;"><span style="display:inline-block;transform:scaleX(0.93)">Relative Level (dB)</span></div>
<svg style="position:absolute;left:1205px;top:82px;" width="40" height="28" viewBox="0 0 40 28"><g stroke="#1d5f92" fill="none" stroke-linecap="round"><path d="M8.5 17.5 L15.5 9.2 L16.6 16.8" stroke-width="1.6"/><path d="M12.5 14.6 H19.2" stroke-width="1.2"/><path d="M20.8 11.2 L19.2 19.4" stroke-width="1.5"/><circle cx="22.2" cy="13.8" r="2.4" stroke-width="1.4"/><path d="M18.2 6.8 C26 5.2 31 9 30 14.6 C29 19.6 25 21.5 19.5 21.8" stroke-width="1.3"/></g></svg>
<div style="position:absolute;box-sizing:border-box;left:1275px;top:80px;width:114px;height:62px;border:1px solid #111;background:#fff;"></div>
<div style="position:absolute;box-sizing:border-box;left:1276px;top:81px;width:112px;height:19px;background:#2e7bb6;"></div>
<span id="t89" style="position:absolute;left:1309.47px;top:84.72px;font-size:12.5px;line-height:12.5px;font-weight:700;color:#fff;white-space:pre;transform:scaleX(1.0385);transform-origin:0 0;">Data</span>
<svg style="position:absolute;left:1374px;top:85px;" width="14" height="10" viewBox="0 0 14 10"><path d="M1 5 H6 M6 2 V8 M6 3 H12 V7 H6" stroke="#fff" stroke-width="1.1" fill="none"/></svg>
<div style="position:absolute;box-sizing:border-box;left:1278.6px;top:103px;width:13px;height:13px;border:1px solid #333;background:#fff;"></div>
<svg style="position:absolute;left:1279px;top:103px;" width="13" height="13" viewBox="0 0 13 13"><path d="M2.5 6 L5 9 L10.5 3" stroke="#333" stroke-width="1.1" fill="none"/></svg>
<div style="position:absolute;box-sizing:border-box;left:1295.5px;top:104.5px;width:11px;height:11px;background:#193a82;"></div>
<span id="t90" style="position:absolute;left:1311.03px;top:105.54px;font-size:12px;line-height:12px;font-weight:400;color:#222;white-space:pre;transform:scaleX(0.8595);transform-origin:0 0;">Ch2</span>
<div style="position:absolute;box-sizing:border-box;left:1278.6px;top:123.5px;width:13px;height:13px;border:1px solid #333;background:#fff;"></div>
<svg style="position:absolute;left:1279px;top:123.5px;" width="13" height="13" viewBox="0 0 13 13"><path d="M2.5 6 L5 9 L10.5 3" stroke="#333" stroke-width="1.1" fill="none"/></svg>
<div style="position:absolute;box-sizing:border-box;left:1295.5px;top:125.0px;width:11px;height:11px;background:#8a1a62;"></div>
<span id="t91" style="position:absolute;left:1311.03px;top:126.04px;font-size:12px;line-height:12px;font-weight:400;color:#222;white-space:pre;transform:scaleX(0.8595);transform-origin:0 0;">Ch2</span>
<span id="t92" style="position:absolute;left:1335.00px;top:128.63px;font-size:10px;line-height:10px;font-weight:400;color:#222;white-space:pre;">2</span>
<div style="position:absolute;box-sizing:border-box;left:315px;top:579px;width:1078px;height:1px;background:#8e8e8e;"></div>
<div style="position:absolute;box-sizing:border-box;left:315px;top:580px;width:1078px;height:1px;background:#fafafa;"></div>
<div style="position:absolute;box-sizing:border-box;left:315px;top:581px;width:1078px;height:38px;background:#f0f0f0;"></div>
<span id="t93" style="position:absolute;left:322.98px;top:593.44px;font-size:12px;line-height:12px;font-weight:400;color:#222;white-space:pre;transform:scaleX(1.0509);transform-origin:0 0;">Mode:</span>
<div style="position:absolute;box-sizing:border-box;left:366px;top:587px;width:148px;height:23px;border:1px solid #acacac;background:#e3e3e3;"></div>
<span id="t94" style="position:absolute;left:369.02px;top:593.44px;font-size:12px;line-height:12px;font-weight:400;color:#111;white-space:pre;transform:scaleX(0.9546);transform-origin:0 0;">Normalized at Reference</span>
<svg style="position:absolute;left:500px;top:595px;" width="10" height="6" viewBox="0 0 10 6"><path d="M1 1 L5 5 L9 1" stroke="#444" stroke-width="1.1" fill="none"/></svg>
<span id="t95" style="position:absolute;left:522.08px;top:593.44px;font-size:12px;line-height:12px;font-weight:400;color:#222;white-space:pre;transform:scaleX(0.9351);transform-origin:0 0;">Ref Frequency:</span>
<div style="position:absolute;box-sizing:border-box;left:608px;top:587px;width:125px;height:23px;border:1px solid #7a7a7a;background:#fff;"></div>
<span id="t96" style="position:absolute;left:611.04px;top:593.04px;font-size:12px;line-height:12px;font-weight:400;color:#111;white-space:pre;transform:scaleX(0.8958);transform-origin:0 0;">1.00000 kHz</span>
<svg style="position:absolute;left:719px;top:595px;" width="10" height="6" viewBox="0 0 10 6"><path d="M1 1 L5 5 L9 1" stroke="#444" stroke-width="1.1" fill="none"/></svg>
<div style="position:absolute;box-sizing:border-box;left:315px;top:619px;width:1078px;height:24px;background:#d9e1e6;"></div>
<div style="position:absolute;box-sizing:border-box;left:318px;top:623px;width:15px;height:15.5px;background:#2c4350;"></div>
<svg style="position:absolute;left:318px;top:623px;" width="15" height="15.5" viewBox="0 0 15 15.5"><rect x="3.5" y="3" width="2" height="9.5" fill="#fff"/><path d="M12 3 L5.5 7.8 L12 12.5 Z" fill="#fff"/></svg>
<div style="position:absolute;box-sizing:border-box;left:340px;top:623px;width:15.5px;height:15.5px;background:#2c4350;"></div>
<svg style="position:absolute;left:340px;top:623px;" width="15.5" height="15.5" viewBox="0 0 15.5 15.5"><rect x="10" y="3" width="2" height="9.5" fill="#fff"/><path d="M3.5 3 L10 7.8 L3.5 12.5 Z" fill="#fff"/></svg>
<div style="position:absolute;box-sizing:border-box;left:362px;top:623px;width:1px;height:16px;background:#f4f6f7;"></div>
<div style="position:absolute;box-sizing:border-box;left:367px;top:623px;width:16px;height:16px;background:#2c4350;"></div>
<svg style="position:absolute;left:367px;top:623px;" width="16" height="16" viewBox="0 0 16 16"><path d="M8 2 V14 M2 8 H14" stroke="#fff" stroke-width="2"/></svg>
<span id="t97" style="position:absolute;left:386.00px;top:624.94px;font-size:12px;line-height:12px;font-weight:400;color:#111;white-space:pre;">Add</span>
<svg style="position:absolute;left:413px;top:630px;" width="6" height="4" viewBox="0 0 6 4"><path d="M0 0 L6 0 L3 3.5 Z" fill="#111"/></svg>
<div style="position:absolute;box-sizing:border-box;left:424px;top:623px;width:15px;height:16px;background:#2c4350;"></div>
<svg style="position:absolute;left:424px;top:623px;" width="15" height="16" viewBox="0 0 15 16"><path d="M3 3.5 L12 12.5 M12 3.5 L3 12.5" stroke="#fff" stroke-width="2"/></svg>
<span id="t98" style="position:absolute;left:441.03px;top:624.94px;font-size:12px;line-height:12px;font-weight:400;color:#111;white-space:pre;transform:scaleX(0.9697);transform-origin:0 0;">Delete</span>
<svg style="position:absolute;left:479px;top:630px;" width="6" height="4" viewBox="0 0 6 4"><path d="M0 0 L6 0 L3 3.5 Z" fill="#111"/></svg>
<div style="position:absolute;box-sizing:border-box;left:491px;top:623px;width:15.5px;height:15.5px;background:#2c4350;"></div>
<svg style="position:absolute;left:491px;top:623px;" width="15.5" height="15.5" viewBox="0 0 15.5 15.5"><path d="M2 6 L4.5 2 L7 6 Z" fill="#fff"/><text x="2.2" y="14" font-family="Liberation Sans" font-size="8" font-weight="700" fill="#fff">1</text><text x="8.5" y="8" font-family="Liberation Sans" font-size="7.5" font-weight="700" fill="#fff">9</text><path d="M8.5 10 H13.5 L11 13.5 Z" fill="#fff"/></svg>
<span id="t99" style="position:absolute;left:509.05px;top:624.94px;font-size:12px;line-height:12px;font-weight:400;color:#111;white-space:pre;transform:scaleX(0.9474);transform-origin:0 0;">Sort By</span>
<svg style="position:absolute;left:551px;top:630px;" width="6" height="4" viewBox="0 0 6 4"><path d="M0 0 L6 0 L3 3.5 Z" fill="#111"/></svg>
<div style="position:absolute;box-sizing:border-box;left:562px;top:623px;width:15.5px;height:15.5px;background:#2c4350;"></div>
<svg style="position:absolute;left:562px;top:623px;" width="15.5" height="15.5" viewBox="0 0 15.5 15.5"><polygon points="6.39,3.57 7.33,1.76 8.17,1.76 9.11,3.57 9.75,3.83 11.69,3.22 12.28,3.81 11.67,5.75 11.93,6.39 13.74,7.33 13.74,8.17 11.93,9.11 11.67,9.75 12.28,11.69 11.69,12.28 9.75,11.67 9.11,11.93 8.17,13.74 7.33,13.74 6.39,11.93 5.75,11.67 3.81,12.28 3.22,11.69 3.83,9.75 3.57,9.11 1.76,8.17 1.76,7.33 3.57,6.39 3.83,5.75 3.22,3.81 3.81,3.22 5.75,3.83" fill="#fff"/><circle cx="7.75" cy="7.75" r="1.8" fill="#3a3a3a"/></svg>
<span id="t100" style="position:absolute;left:580.00px;top:624.94px;font-size:12px;line-height:12px;font-weight:400;color:#111;white-space:pre;transform:scaleX(0.9341);transform-origin:0 0;">Details</span>
<svg style="position:absolute;left:1372px;top:624px;" width="15" height="13" viewBox="0 0 15 13"><path d="M7.5 1 V7 M4.5 4.5 L7.5 8 L10.5 4.5" stroke="#2a4a66" stroke-width="2" fill="none"/><path d="M1.5 11.5 H13.5" stroke="#2a4a66" stroke-width="2"/></svg>
<div style="position:absolute;box-sizing:border-box;left:315px;top:643px;width:1078px;height:78px;background:#fff;"></div>
<div style="position:absolute;box-sizing:border-box;left:335px;top:648.5px;width:84.6px;height:52px;border:2px solid #bfc9ce;background:#fff;"></div>
<div style="position:absolute;box-sizing:border-box;left:338px;top:651.3px;width:78.6px;height:46.5px;border:1.5px solid #46555f;background:#fdfdfd;"></div>
<span id="t101" style="position:absolute;left:350.06px;top:703.24px;font-size:12px;line-height:12px;font-weight:400;color:#222;white-space:pre;transform:scaleX(0.9123);transform-origin:0 0;">RMS Level</span>
<svg style="position:absolute;left:342px;top:655px;" width="70.6" height="39" viewBox="0 0 70.6 39"><path d="M5.9 0 V39" stroke="#eef1f3" stroke-width="0.6"/><path d="M11.8 0 V39" stroke="#eef1f3" stroke-width="0.6"/><path d="M17.6 0 V39" stroke="#eef1f3" stroke-width="0.6"/><path d="M23.5 0 V39" stroke="#eef1f3" stroke-width="0.6"/><path d="M29.4 0 V39" stroke="#eef1f3" stroke-width="0.6"/><path d="M35.3 0 V39" stroke="#eef1f3" stroke-width="0.6"/><path d="M41.2 0 V39" stroke="#eef1f3" stroke-width="0.6"/><path d="M47.1 0 V39" stroke="#eef1f3" stroke-width="0.6"/><path d="M52.9 0 V39" stroke="#eef1f3" stroke-width="0.6"/><path d="M58.8 0 V39" stroke="#eef1f3" stroke-width="0.6"/><path d="M64.7 0 V39" stroke="#eef1f3" stroke-width="0.6"/><path d="M0 3.9 H70.6" stroke="#eef1f3" stroke-width="0.6"/><path d="M0 7.8 H70.6" stroke="#eef1f3" stroke-width="0.6"/><path d="M0 11.7 H70.6" stroke="#eef1f3" stroke-width="0.6"/><path d="M0 15.6 H70.6" stroke="#eef1f3" stroke-width="0.6"/><path d="M0 19.5 H70.6" stroke="#eef1f3" stroke-width="0.6"/><path d="M0 23.4 H70.6" stroke="#eef1f3" stroke-width="0.6"/><path d="M0 27.3 H70.6" stroke="#eef1f3" stroke-width="0.6"/><path d="M0 31.2 H70.6" stroke="#eef1f3" stroke-width="0.6"/><path d="M0 35.1 H70.6" stroke="#eef1f3" stroke-width="0.6"/><path d="M0 2 V38 H70.6" stroke="#d0d0d0" stroke-width="0.8" fill="none"/><path d="M1 21.840000000000003 H70.6" stroke="#cfcfcf" stroke-width="0.9"/></svg>
<div style="position:absolute;box-sizing:border-box;left:456.3px;top:648.5px;width:84.3px;height:52px;border:2px solid #bfc9ce;background:#fff;"></div>
<div style="position:absolute;box-sizing:border-box;left:459.3px;top:651.3px;width:78.3px;height:46.5px;border:1.5px solid #46555f;background:#fdfdfd;"></div>
<span id="t102" style="position:absolute;left:485.96px;top:703.24px;font-size:12px;line-height:12px;font-weight:400;color:#222;white-space:pre;transform:scaleX(0.9661);transform-origin:0 0;">Gain</span>
<svg style="position:absolute;left:463.3px;top:655px;" width="70.3" height="39" viewBox="0 0 70.3 39"><path d="M5.9 0 V39" stroke="#eef1f3" stroke-width="0.6"/><path d="M11.7 0 V39" stroke="#eef1f3" stroke-width="0.6"/><path d="M17.6 0 V39" stroke="#eef1f3" stroke-width="0.6"/><path d="M23.4 0 V39" stroke="#eef1f3" stroke-width="0.6"/><path d="M29.3 0 V39" stroke="#eef1f3" stroke-width="0.6"/><path d="M35.1 0 V39" stroke="#eef1f3" stroke-width="0.6"/><path d="M41.0 0 V39" stroke="#eef1f3" stroke-width="0.6"/><path d="M46.9 0 V39" stroke="#eef1f3" stroke-width="0.6"/><path d="M52.7 0 V39" stroke="#eef1f3" stroke-width="0.6"/><path d="M58.6 0 V39" stroke="#eef1f3" stroke-width="0.6"/><path d="M64.4 0 V39" stroke="#eef1f3" stroke-width="0.6"/><path d="M0 3.9 H70.3" stroke="#eef1f3" stroke-width="0.6"/><path d="M0 7.8 H70.3" stroke="#eef1f3" stroke-width="0.6"/><path d="M0 11.7 H70.3" stroke="#eef1f3" stroke-width="0.6"/><path d="M0 15.6 H70.3" stroke="#eef1f3" stroke-width="0.6"/><path d="M0 19.5 H70.3" stroke="#eef1f3" stroke-width="0.6"/><path d="M0 23.4 H70.3" stroke="#eef1f3" stroke-width="0.6"/><path d="M0 27.3 H70.3" stroke="#eef1f3" stroke-width="0.6"/><path d="M0 31.2 H70.3" stroke="#eef1f3" stroke-width="0.6"/><path d="M0 35.1 H70.3" stroke="#eef1f3" stroke-width="0.6"/><path d="M0 2 V38 H70.3" stroke="#d0d0d0" stroke-width="0.8" fill="none"/><path d="M1 21.840000000000003 H70.3" stroke="#cfcfcf" stroke-width="0.9"/></svg>
<div style="position:absolute;box-sizing:border-box;left:577px;top:648.5px;width:84px;height:51px;border:2px solid #3e5a6b;background:#fff;"></div>
<div style="position:absolute;box-sizing:border-box;left:580px;top:652.5px;width:78px;height:44.5px;border:1.5px solid #6c7e88;background:#fdfdfd;"></div>
<div style="position:absolute;box-sizing:border-box;left:561px;top:700px;width:116px;height:16.5px;background:#4b6b80;"></div>
<span id="t103" style="position:absolute;left:577.59px;top:703.24px;font-size:12px;line-height:12px;font-weight:400;color:#fff;white-space:pre;transform:scaleX(0.9300);transform-origin:0 0;">Relative  Level...</span>
<svg style="position:absolute;left:584px;top:655px;" width="70" height="39" viewBox="0 0 70 39"><path d="M5.8 0 V39" stroke="#eef1f3" stroke-width="0.6"/><path d="M11.7 0 V39" stroke="#eef1f3" stroke-width="0.6"/><path d="M17.5 0 V39" stroke="#eef1f3" stroke-width="0.6"/><path d="M23.3 0 V39" stroke="#eef1f3" stroke-width="0.6"/><path d="M29.2 0 V39" stroke="#eef1f3" stroke-width="0.6"/><path d="M35.0 0 V39" stroke="#eef1f3" stroke-width="0.6"/><path d="M40.8 0 V39" stroke="#eef1f3" stroke-width="0.6"/><path d="M46.7 0 V39" stroke="#eef1f3" stroke-width="0.6"/><path d="M52.5 0 V39" stroke="#eef1f3" stroke-width="0.6"/><path d="M58.3 0 V39" stroke="#eef1f3" stroke-width="0.6"/><path d="M64.2 0 V39" stroke="#eef1f3" stroke-width="0.6"/><path d="M0 3.9 H70" stroke="#eef1f3" stroke-width="0.6"/><path d="M0 7.8 H70" stroke="#eef1f3" stroke-width="0.6"/><path d="M0 11.7 H70" stroke="#eef1f3" stroke-width="0.6"/><path d="M0 15.6 H70" stroke="#eef1f3" stroke-width="0.6"/><path d="M0 19.5 H70" stroke="#eef1f3" stroke-width="0.6"/><path d="M0 23.4 H70" stroke="#eef1f3" stroke-width="0.6"/><path d="M0 27.3 H70" stroke="#eef1f3" stroke-width="0.6"/><path d="M0 31.2 H70" stroke="#eef1f3" stroke-width="0.6"/><path d="M0 35.1 H70" stroke="#eef1f3" stroke-width="0.6"/><path d="M0 2 V38 H70" stroke="#d0d0d0" stroke-width="0.8" fill="none"/><path d="M1 16.77 C20 16.77 30 23.4 45 19.5 S60 17.55 70 18.72" stroke="#cfcfcf" stroke-width="0.9" fill="none"/></svg>
<div style="position:absolute;box-sizing:border-box;left:697.5px;top:648.5px;width:84.1px;height:52px;border:2px solid #bfc9ce;background:#fff;"></div>
<div style="position:absolute;box-sizing:border-box;left:700.5px;top:655px;width:78.1px;height:38.5px;border:1.5px solid #46555f;background:#fdfdfd;"></div>
<span id="t104" style="position:absolute;left:684.50px;top:703.24px;font-size:12px;line-height:12px;font-weight:400;color:#222;white-space:pre;transform:scaleX(0.9908);transform-origin:0 0;">Deviation (20.0000...</span>
<svg style="position:absolute;left:703.5px;top:657px;" width="72.1" height="33" viewBox="0 0 72.1 33"><path d="M0.5 2 V30 M62 0 V30 M0.5 29.5 H62" stroke="#e4e4e4" stroke-width="0.7" fill="none"/><rect x="2.5" y="11" width="5" height="10" fill="#3d5b94"/><path d="M63 16.5 H70" stroke="#c8c8c8" stroke-width="1" stroke-dasharray="1 1"/></svg>
<div style="position:absolute;box-sizing:border-box;left:818px;top:648.5px;width:84px;height:52px;border:2px solid #bfc9ce;background:#fff;"></div>
<div style="position:absolute;box-sizing:border-box;left:821px;top:651.3px;width:78px;height:46.5px;border:1.5px solid #46555f;background:#fdfdfd;"></div>
<span id="t105" style="position:absolute;left:844.62px;top:703.24px;font-size:12px;line-height:12px;font-weight:400;color:#222;white-space:pre;transform:scaleX(0.8788);transform-origin:0 0;">Phase</span>
<svg style="position:absolute;left:825px;top:655px;" width="70" height="39" viewBox="0 0 70 39"><path d="M5.8 0 V39" stroke="#eef1f3" stroke-width="0.6"/><path d="M11.7 0 V39" stroke="#eef1f3" stroke-width="0.6"/><path d="M17.5 0 V39" stroke="#eef1f3" stroke-width="0.6"/><path d="M23.3 0 V39" stroke="#eef1f3" stroke-width="0.6"/><path d="M29.2 0 V39" stroke="#eef1f3" stroke-width="0.6"/><path d="M35.0 0 V39" stroke="#eef1f3" stroke-width="0.6"/><path d="M40.8 0 V39" stroke="#eef1f3" stroke-width="0.6"/><path d="M46.7 0 V39" stroke="#eef1f3" stroke-width="0.6"/><path d="M52.5 0 V39" stroke="#eef1f3" stroke-width="0.6"/><path d="M58.3 0 V39" stroke="#eef1f3" stroke-width="0.6"/><path d="M64.2 0 V39" stroke="#eef1f3" stroke-width="0.6"/><path d="M0 3.9 H70" stroke="#eef1f3" stroke-width="0.6"/><path d="M0 7.8 H70" stroke="#eef1f3" stroke-width="0.6"/><path d="M0 11.7 H70" stroke="#eef1f3" stroke-width="0.6"/><path d="M0 15.6 H70" stroke="#eef1f3" stroke-width="0.6"/><path d="M0 19.5 H70" stroke="#eef1f3" stroke-width="0.6"/><path d="M0 23.4 H70" stroke="#eef1f3" stroke-width="0.6"/><path d="M0 27.3 H70" stroke="#eef1f3" stroke-width="0.6"/><path d="M0 31.2 H70" stroke="#eef1f3" stroke-width="0.6"/><path d="M0 35.1 H70" stroke="#eef1f3" stroke-width="0.6"/><path d="M0 2 V38 H70" stroke="#d0d0d0" stroke-width="0.8" fill="none"/><path d="M1 19.5 H70" stroke="#cfcfcf" stroke-width="0.9"/></svg>
<div style="position:absolute;box-sizing:border-box;left:939px;top:648.5px;width:84px;height:52px;border:2px solid #bfc9ce;background:#fff;"></div>
<div style="position:absolute;box-sizing:border-box;left:942px;top:651.3px;width:78px;height:46.5px;border:1.5px solid #46555f;background:#fdfdfd;"></div>
<span id="t106" style="position:absolute;left:948.55px;top:703.24px;font-size:12px;line-height:12px;font-weight:400;color:#222;white-space:pre;transform:scaleX(0.9545);transform-origin:0 0;">Group Delay</span>
<svg style="position:absolute;left:946px;top:655px;" width="70" height="39" viewBox="0 0 70 39"><path d="M5.8 0 V39" stroke="#eef1f3" stroke-width="0.6"/><path d="M11.7 0 V39" stroke="#eef1f3" stroke-width="0.6"/><path d="M17.5 0 V39" stroke="#eef1f3" stroke-width="0.6"/><path d="M23.3 0 V39" stroke="#eef1f3" stroke-width="0.6"/><path d="M29.2 0 V39" stroke="#eef1f3" stroke-width="0.6"/><path d="M35.0 0 V39" stroke="#eef1f3" stroke-width="0.6"/><path d="M40.8 0 V39" stroke="#eef1f3" stroke-width="0.6"/><path d="M46.7 0 V39" stroke="#eef1f3" stroke-width="0.6"/><path d="M52.5 0 V39" stroke="#eef1f3" stroke-width="0.6"/><path d="M58.3 0 V39" stroke="#eef1f3" stroke-width="0.6"/><path d="M64.2 0 V39" stroke="#eef1f3" stroke-width="0.6"/><path d="M0 3.9 H70" stroke="#eef1f3" stroke-width="0.6"/><path d="M0 7.8 H70" stroke="#eef1f3" stroke-width="0.6"/><path d="M0 11.7 H70" stroke="#eef1f3" stroke-width="0.6"/><path d="M0 15.6 H70" stroke="#eef1f3" stroke-width="0.6"/><path d="M0 19.5 H70" stroke="#eef1f3" stroke-width="0.6"/><path d="M0 23.4 H70" stroke="#eef1f3" stroke-width="0.6"/><path d="M0 27.3 H70" stroke="#eef1f3" stroke-width="0.6"/><path d="M0 31.2 H70" stroke="#eef1f3" stroke-width="0.6"/><path d="M0 35.1 H70" stroke="#eef1f3" stroke-width="0.6"/><path d="M0 2 V38 H70" stroke="#d0d0d0" stroke-width="0.8" fill="none"/></svg>
<svg style="position:absolute;left:969px;top:668px;" width="26" height="14" viewBox="0 0 26 14"><path d="M13 1 L19 12.5 H7 Z" stroke="#a9bccb" stroke-width="1.1" fill="none"/><path d="M13 4 V10" stroke="#a9bccb" stroke-width="1"/><path d="M0 5 H8 M18 5 H26 M0 9 H7 M19 9 H26" stroke="#cdd9e2" stroke-width="1"/></svg>
<svg style="position:absolute;left:1005px;top:681px;" width="15" height="13" viewBox="0 0 15 13"><path d="M7.5 0.5 L14.5 12.5 H0.5 Z" fill="#f2c21b"/><path d="M7.5 4 V9" stroke="#222" stroke-width="1.6"/><circle cx="7.5" cy="10.8" r="0.9" fill="#222"/></svg>
<div style="position:absolute;box-sizing:border-box;left:1059.5px;top:648.5px;width:84px;height:52px;border:2px solid #bfc9ce;background:#fff;"></div>
<div style="position:absolute;box-sizing:border-box;left:1062.5px;top:651.3px;width:78px;height:46.5px;border:1.5px solid #46555f;background:#fdfdfd;"></div>
<span id="t107" style="position:absolute;left:1075.55px;top:703.24px;font-size:12px;line-height:12px;font-weight:400;color:#222;white-space:pre;transform:scaleX(0.9094);transform-origin:0 0;">THD Ratio</span>
<svg style="position:absolute;left:1066.5px;top:655px;" width="70" height="39" viewBox="0 0 70 39"><path d="M5.8 0 V39" stroke="#eef1f3" stroke-width="0.6"/><path d="M11.7 0 V39" stroke="#eef1f3" stroke-width="0.6"/><path d="M17.5 0 V39" stroke="#eef1f3" stroke-width="0.6"/><path d="M23.3 0 V39" stroke="#eef1f3" stroke-width="0.6"/><path d="M29.2 0 V39" stroke="#eef1f3" stroke-width="0.6"/><path d="M35.0 0 V39" stroke="#eef1f3" stroke-width="0.6"/><path d="M40.8 0 V39" stroke="#eef1f3" stroke-width="0.6"/><path d="M46.7 0 V39" stroke="#eef1f3" stroke-width="0.6"/><path d="M52.5 0 V39" stroke="#eef1f3" stroke-width="0.6"/><path d="M58.3 0 V39" stroke="#eef1f3" stroke-width="0.6"/><path d="M64.2 0 V39" stroke="#eef1f3" stroke-width="0.6"/><path d="M0 3.9 H70" stroke="#eef1f3" stroke-width="0.6"/><path d="M0 7.8 H70" stroke="#eef1f3" stroke-width="0.6"/><path d="M0 11.7 H70" stroke="#eef1f3" stroke-width="0.6"/><path d="M0 15.6 H70" stroke="#eef1f3" stroke-width="0.6"/><path d="M0 19.5 H70" stroke="#eef1f3" stroke-width="0.6"/><path d="M0 23.4 H70" stroke="#eef1f3" stroke-width="0.6"/><path d="M0 27.3 H70" stroke="#eef1f3" stroke-width="0.6"/><path d="M0 31.2 H70" stroke="#eef1f3" stroke-width="0.6"/><path d="M0 35.1 H70" stroke="#eef1f3" stroke-width="0.6"/><path d="M0 2 V38 H70" stroke="#d0d0d0" stroke-width="0.8" fill="none"/><path d="M1 23.4 C20 20.28 40 17.55 70 22.619999999999997" stroke="#dcc8cc" stroke-width="0.9" fill="none"/></svg>
<div style="position:absolute;box-sizing:border-box;left:1180.5px;top:648.5px;width:84px;height:52px;border:2px solid #bfc9ce;background:#fff;"></div>
<div style="position:absolute;box-sizing:border-box;left:1183.5px;top:651.3px;width:78px;height:46.5px;border:1.5px solid #46555f;background:#fdfdfd;"></div>
<span id="t108" style="position:absolute;left:1197.05px;top:703.24px;font-size:12px;line-height:12px;font-weight:400;color:#222;white-space:pre;transform:scaleX(0.8929);transform-origin:0 0;">THD Level</span>
<svg style="position:absolute;left:1187.5px;top:655px;" width="70" height="39" viewBox="0 0 70 39"><path d="M5.8 0 V39" stroke="#eef1f3" stroke-width="0.6"/><path d="M11.7 0 V39" stroke="#eef1f3" stroke-width="0.6"/><path d="M17.5 0 V39" stroke="#eef1f3" stroke-width="0.6"/><path d="M23.3 0 V39" stroke="#eef1f3" stroke-width="0.6"/><path d="M29.2 0 V39" stroke="#eef1f3" stroke-width="0.6"/><path d="M35.0 0 V39" stroke="#eef1f3" stroke-width="0.6"/><path d="M40.8 0 V39" stroke="#eef1f3" stroke-width="0.6"/><path d="M46.7 0 V39" stroke="#eef1f3" stroke-width="0.6"/><path d="M52.5 0 V39" stroke="#eef1f3" stroke-width="0.6"/><path d="M58.3 0 V39" stroke="#eef1f3" stroke-width="0.6"/><path d="M64.2 0 V39" stroke="#eef1f3" stroke-width="0.6"/><path d="M0 3.9 H70" stroke="#eef1f3" stroke-width="0.6"/><path d="M0 7.8 H70" stroke="#eef1f3" stroke-width="0.6"/><path d="M0 11.7 H70" stroke="#eef1f3" stroke-width="0.6"/><path d="M0 15.6 H70" stroke="#eef1f3" stroke-width="0.6"/><path d="M0 19.5 H70" stroke="#eef1f3" stroke-width="0.6"/><path d="M0 23.4 H70" stroke="#eef1f3" stroke-width="0.6"/><path d="M0 27.3 H70" stroke="#eef1f3" stroke-width="0.6"/><path d="M0 31.2 H70" stroke="#eef1f3" stroke-width="0.6"/><path d="M0 35.1 H70" stroke="#eef1f3" stroke-width="0.6"/><path d="M0 2 V38 H70" stroke="#d0d0d0" stroke-width="0.8" fill="none"/><path d="M1 36.27 C20 33.15 40 33.15 70 35.1" stroke="#e4c4cc" stroke-width="0.9" fill="none"/></svg>
<div style="position:absolute;box-sizing:border-box;left:1301px;top:648.5px;width:84px;height:52px;border:2px solid #bfc9ce;background:#fff;"></div>
<div style="position:absolute;box-sizing:border-box;left:1304px;top:651.3px;width:78px;height:46.5px;border:1.5px solid #46555f;background:#fdfdfd;"></div>
<span id="t109" style="position:absolute;left:1289.01px;top:703.24px;font-size:12px;line-height:12px;font-weight:400;color:#222;white-space:pre;transform:scaleX(0.9770);transform-origin:0 0;">Distortion  Product..</span>
<svg style="position:absolute;left:1308px;top:655px;" width="70" height="39" viewBox="0 0 70 39"><path d="M5.8 0 V39" stroke="#eef1f3" stroke-width="0.6"/><path d="M11.7 0 V39" stroke="#eef1f3" stroke-width="0.6"/><path d="M17.5 0 V39" stroke="#eef1f3" stroke-width="0.6"/><path d="M23.3 0 V39" stroke="#eef1f3" stroke-width="0.6"/><path d="M29.2 0 V39" stroke="#eef1f3" stroke-width="0.6"/><path d="M35.0 0 V39" stroke="#eef1f3" stroke-width="0.6"/><path d="M40.8 0 V39" stroke="#eef1f3" stroke-width="0.6"/><path d="M46.7 0 V39" stroke="#eef1f3" stroke-width="0.6"/><path d="M52.5 0 V39" stroke="#eef1f3" stroke-width="0.6"/><path d="M58.3 0 V39" stroke="#eef1f3" stroke-width="0.6"/><path d="M64.2 0 V39" stroke="#eef1f3" stroke-width="0.6"/><path d="M0 3.9 H70" stroke="#eef1f3" stroke-width="0.6"/><path d="M0 7.8 H70" stroke="#eef1f3" stroke-width="0.6"/><path d="M0 11.7 H70" stroke="#eef1f3" stroke-width="0.6"/><path d="M0 15.6 H70" stroke="#eef1f3" stroke-width="0.6"/><path d="M0 19.5 H70" stroke="#eef1f3" stroke-width="0.6"/><path d="M0 23.4 H70" stroke="#eef1f3" stroke-width="0.6"/><path d="M0 27.3 H70" stroke="#eef1f3" stroke-width="0.6"/><path d="M0 31.2 H70" stroke="#eef1f3" stroke-width="0.6"/><path d="M0 35.1 H70" stroke="#eef1f3" stroke-width="0.6"/><path d="M0 2 V38 H70" stroke="#d0d0d0" stroke-width="0.8" fill="none"/><path d="M1 21.450000000000003 L6 19.5 L12 21.840000000000003 L18 18.72 L24 22.229999999999997 L30 20.28 L36 21.450000000000003 L44 20.67 L52 21.840000000000003 L60 20.28 L70 21.840000000000003" stroke="#d6d6d6" stroke-width="0.9" fill="none"/></svg>
<div style="position:absolute;box-sizing:border-box;left:315px;top:721px;width:1078px;height:15px;background:#f0f0f0;"></div>
<div style="position:absolute;box-sizing:border-box;left:331px;top:721px;width:491px;height:15px;background:#cdcdcd;"></div>
<svg style="position:absolute;left:319px;top:724px;" width="8" height="9" viewBox="0 0 8 9"><path d="M6 1 L2 4.5 L6 8" stroke="#333" stroke-width="1.8" fill="none"/></svg>
<svg style="position:absolute;left:1381px;top:724px;" width="8" height="9" viewBox="0 0 8 9"><path d="M2 1 L6 4.5 L2 8" stroke="#333" stroke-width="1.8" fill="none"/></svg>
<div style="position:absolute;box-sizing:border-box;left:315px;top:736px;width:1078px;height:1px;background:#dfe6ea;"></div>
<div style="position:absolute;box-sizing:border-box;left:315px;top:737px;width:1078px;height:2px;background:#4a6478;"></div>
</body></html>
